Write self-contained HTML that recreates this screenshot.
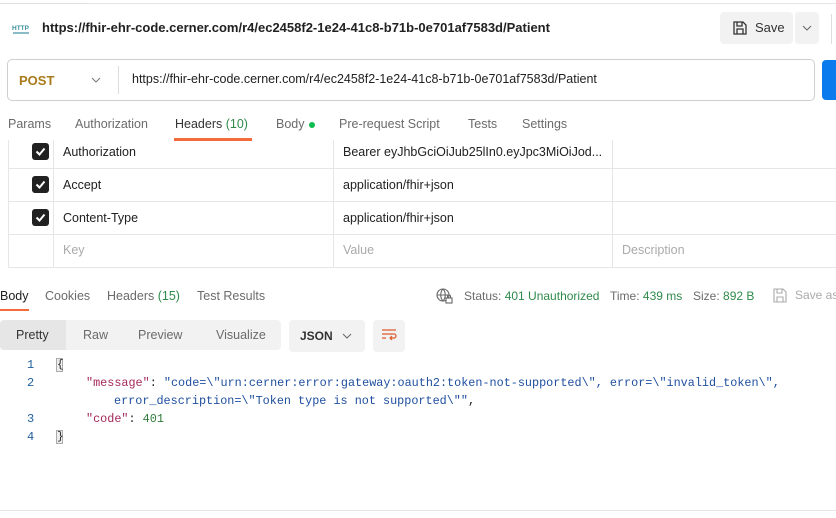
<!DOCTYPE html>
<html><head><meta charset="utf-8"><style>
*{margin:0;padding:0;box-sizing:border-box}
body{width:836px;height:518px;overflow:hidden;background:#fff;font-family:"Liberation Sans",sans-serif;font-size:12.5px;color:#212121;position:relative}
.a{position:absolute;white-space:nowrap}
.mono{font-family:"Liberation Mono",monospace;font-size:12px}
.g{color:#6b6b6b}
.cb{position:absolute;left:32px;width:17px;height:17px;background:#212121;border-radius:3px}
.cb svg{position:absolute;left:3px;top:3px}
.hl{position:absolute;height:1px;background:#e6e6e6}
.vl{position:absolute;width:1px;background:#e6e6e6}
</style></head><body>
<div class="hl" style="left:0;top:3px;width:335px;background:#e0e0e0"></div>
<div class="hl" style="left:88px;top:3px;width:748px;background:#e6e6e6"></div>
<!-- title -->
<svg class="a" style="left:12px;top:21px" width="18" height="14" viewBox="0 0 18 14"><text x="0" y="9" font-size="6.5" font-family="Liberation Sans" fill="#3a8fa0" font-weight="bold" textLength="17" lengthAdjust="spacingAndGlyphs">HTTP</text><path d="M1 12h16" stroke="#3a8fa0" stroke-width="1.2"/></svg>
<div class="a" style="left:42px;top:20px;font-size:13px;font-weight:bold;color:#212121">https://fhir-ehr-code.cerner.com/r4/ec2458f2-1e24-41c8-b71b-0e701af7583d/Patient</div>
<div class="a" style="left:720px;top:12px;width:73px;height:32px;background:#f2f2f2;border-radius:4px"></div>
<svg class="a" style="left:732px;top:20px" width="16" height="16" viewBox="0 0 16 16" fill="none" stroke="#333" stroke-width="1.3"><path d="M2 2h9l3 3v9H2z"/><path d="M5 2v4h5V2M5 14V9h6v5"/></svg>
<div class="a" style="left:755px;top:20px;color:#333;font-size:13px">Save</div>
<div class="a" style="left:795px;top:12px;width:24px;height:32px;background:#f2f2f2;border-radius:4px"></div>
<svg class="a" style="left:802px;top:25px" width="10" height="6"><path d="M1 1l4 4 4-4" stroke="#666" fill="none"/></svg>
<div class="vl" style="left:831px;top:14px;height:30px;background:#ddd"></div>
<!-- url bar -->
<div class="a" style="left:7px;top:59px;width:808px;height:42px;border:1px solid #cfcfcf;border-radius:5px"></div>
<div class="a" style="left:19px;top:73px;font-weight:bold;color:#a87a1a;font-size:13px">POST</div>
<svg class="a" style="left:91px;top:77px" width="10" height="6"><path d="M1 1l4 4 4-4" stroke="#777" fill="none"/></svg>
<div class="vl" style="left:118px;top:66px;height:28px;background:#ddd"></div>
<div class="a" style="left:132px;top:72px;font-size:12.5px">https://fhir-ehr-code.cerner.com/r4/ec2458f2-1e24-41c8-b71b-0e701af7583d/Patient</div>
<div class="a" style="left:822px;top:60px;width:20px;height:40px;background:#097bed;border-radius:4px"></div>
<!-- tabs -->
<div class="a g" style="left:8px;top:117px">Params</div>
<div class="a g" style="left:75px;top:117px">Authorization</div>
<div class="a" style="left:175px;top:117px;color:#333">Headers <span style="color:#2f8a4a">(10)</span></div>
<div class="a" style="left:174px;top:138px;width:78px;height:3px;background:#f26b3a"></div>
<div class="a g" style="left:276px;top:117px">Body</div>
<div class="a" style="left:309px;top:122px;width:6px;height:6px;border-radius:3px;background:#0cbb52"></div>
<div class="a g" style="left:339px;top:117px">Pre-request Script</div>
<div class="a g" style="left:468px;top:117px">Tests</div>
<div class="a g" style="left:522px;top:117px">Settings</div>
<!-- table -->
<div class="vl" style="left:8px;top:140px;height:128px"></div>
<div class="vl" style="left:53px;top:140px;height:128px"></div>
<div class="vl" style="left:333px;top:140px;height:128px"></div>
<div class="vl" style="left:612px;top:140px;height:128px"></div>
<div class="hl" style="left:8px;top:168px;width:828px"></div>
<div class="hl" style="left:8px;top:201px;width:828px"></div>
<div class="hl" style="left:8px;top:234px;width:828px"></div>
<div class="hl" style="left:8px;top:267px;width:828px"></div>
<div class="cb" style="top:143px"><svg width="11" height="11"><path d="M1.5 5.5l3 3 5-6" stroke="#fff" stroke-width="2" fill="none"/></svg></div>
<div class="cb" style="top:176px"><svg width="11" height="11"><path d="M1.5 5.5l3 3 5-6" stroke="#fff" stroke-width="2" fill="none"/></svg></div>
<div class="cb" style="top:209px"><svg width="11" height="11"><path d="M1.5 5.5l3 3 5-6" stroke="#fff" stroke-width="2" fill="none"/></svg></div>
<div class="a" style="left:63px;top:145px">Authorization</div>
<div class="a" style="left:343px;top:145px">Bearer eyJhbGciOiJub25lIn0.eyJpc3MiOiJod...</div>
<div class="a" style="left:63px;top:178px">Accept</div>
<div class="a" style="left:343px;top:178px">application/fhir+json</div>
<div class="a" style="left:63px;top:211px">Content-Type</div>
<div class="a" style="left:343px;top:211px">application/fhir+json</div>
<div class="a" style="left:63px;top:243px;color:#aaa">Key</div>
<div class="a" style="left:343px;top:243px;color:#aaa">Value</div>
<div class="a" style="left:622px;top:243px;color:#aaa">Description</div>
<!-- response tabs -->
<div class="a" style="left:0;top:289px;color:#212121">Body</div>
<div class="a" style="left:0;top:309px;width:29px;height:2px;background:#f26b3a"></div>
<div class="a g" style="left:45px;top:289px">Cookies</div>
<div class="a g" style="left:107px;top:289px">Headers <span style="color:#2f8a4a">(15)</span></div>
<div class="a g" style="left:197px;top:289px">Test Results</div>
<svg class="a" style="left:436px;top:288px" width="17" height="16" viewBox="0 0 17 16" fill="none" stroke="#666" stroke-width="1.1"><circle cx="7" cy="7" r="6"/><path d="M1 7h12M7 1c-3 3-3 9 0 12M7 1c3 3 3 9 0 12"/><rect x="10" y="10" width="6" height="5" fill="#fff"/><path d="M11.5 10V8.5a1.5 1.5 0 013 0V10"/></svg>
<div class="a g" style="left:464px;top:289px;font-size:12px">Status: <span style="color:#2f8a4a">401 Unauthorized</span></div>
<div class="a g" style="left:610px;top:289px;font-size:12px">Time: <span style="color:#2f8a4a">439 ms</span></div>
<div class="a g" style="left:693px;top:289px;font-size:12px">Size: <span style="color:#2f8a4a">892 B</span></div>
<svg class="a" style="left:773px;top:288px" width="14" height="15" viewBox="0 0 14 15" fill="none" stroke="#aaa" stroke-width="1.1"><path d="M1 1h9l3 3v10H1z"/><path d="M4 1v4h5V1M4 14V9h6v5"/></svg>
<div class="a" style="left:795px;top:288px;color:#aaa;font-size:12px">Save as</div>
<!-- view toggles -->
<div class="a" style="left:0;top:320px;width:281px;height:30px;background:#f2f2f2;border-radius:4px"></div>
<div class="a" style="left:0;top:320px;width:66px;height:30px;background:#e6e6e6;border-radius:4px 0 0 4px"></div>
<div class="a" style="left:16px;top:328px;color:#333">Pretty</div>
<div class="a g" style="left:83px;top:328px">Raw</div>
<div class="a g" style="left:138px;top:328px">Preview</div>
<div class="a g" style="left:216px;top:328px">Visualize</div>
<div class="a" style="left:289px;top:320px;width:76px;height:32px;background:#f2f2f2;border-radius:4px"></div>
<div class="a" style="left:300px;top:329px;font-weight:bold;color:#333;font-size:12px">JSON</div>
<svg class="a" style="left:342px;top:333px" width="10" height="6"><path d="M1 1l4 4 4-4" stroke="#666" fill="none"/></svg>
<div class="a" style="left:373px;top:320px;width:32px;height:32px;background:#f2f2f2;border-radius:4px"></div>
<svg class="a" style="left:381px;top:328px" width="16" height="14" viewBox="0 0 16 14" fill="none" stroke="#e05a2a" stroke-width="1.2"><path d="M1 2h14M1 6h12a2 2 0 010 4H9M11 8l-2 2 2 2M1 10h4"/></svg>
<!-- code -->
<div class="a mono" style="left:27px;top:358px;color:#1f5e9e">1</div>
<div class="a mono" style="left:27px;top:376px;color:#1f5e9e">2</div>
<div class="a mono" style="left:27px;top:412px;color:#1f5e9e">3</div>
<div class="a mono" style="left:27px;top:430px;color:#1f5e9e">4</div>
<div class="a mono" style="left:56px;top:358px;border:1px solid #aaa;background:#eee;width:7px;height:14px;font-size:11px;line-height:12px">{</div>
<div class="a mono" style="left:56px;top:430px;border:1px solid #aaa;background:#eee;width:7px;height:14px;font-size:11px;line-height:12px">}</div>
<div class="a mono" style="left:86px;top:376px;font-size:11.8px"><span style="color:#a3285a">"message"</span>: <span style="color:#1f4fa0">"code=\"urn:cerner:error:gateway:oauth2:token-not-supported\", error=\"invalid_token\",</span></div>
<div class="a mono" style="left:114px;top:394px;font-size:11.8px;color:#1f4fa0">error_description=\"Token type is not supported\""<span style="color:#212121">,</span></div>
<div class="a mono" style="left:86px;top:412px;font-size:11.8px"><span style="color:#a3285a">"code"</span>: <span style="color:#2f7a3a">401</span></div>
<div class="hl" style="left:0;top:510px;width:836px;background:#e6e6e6"></div>
</body></html>
